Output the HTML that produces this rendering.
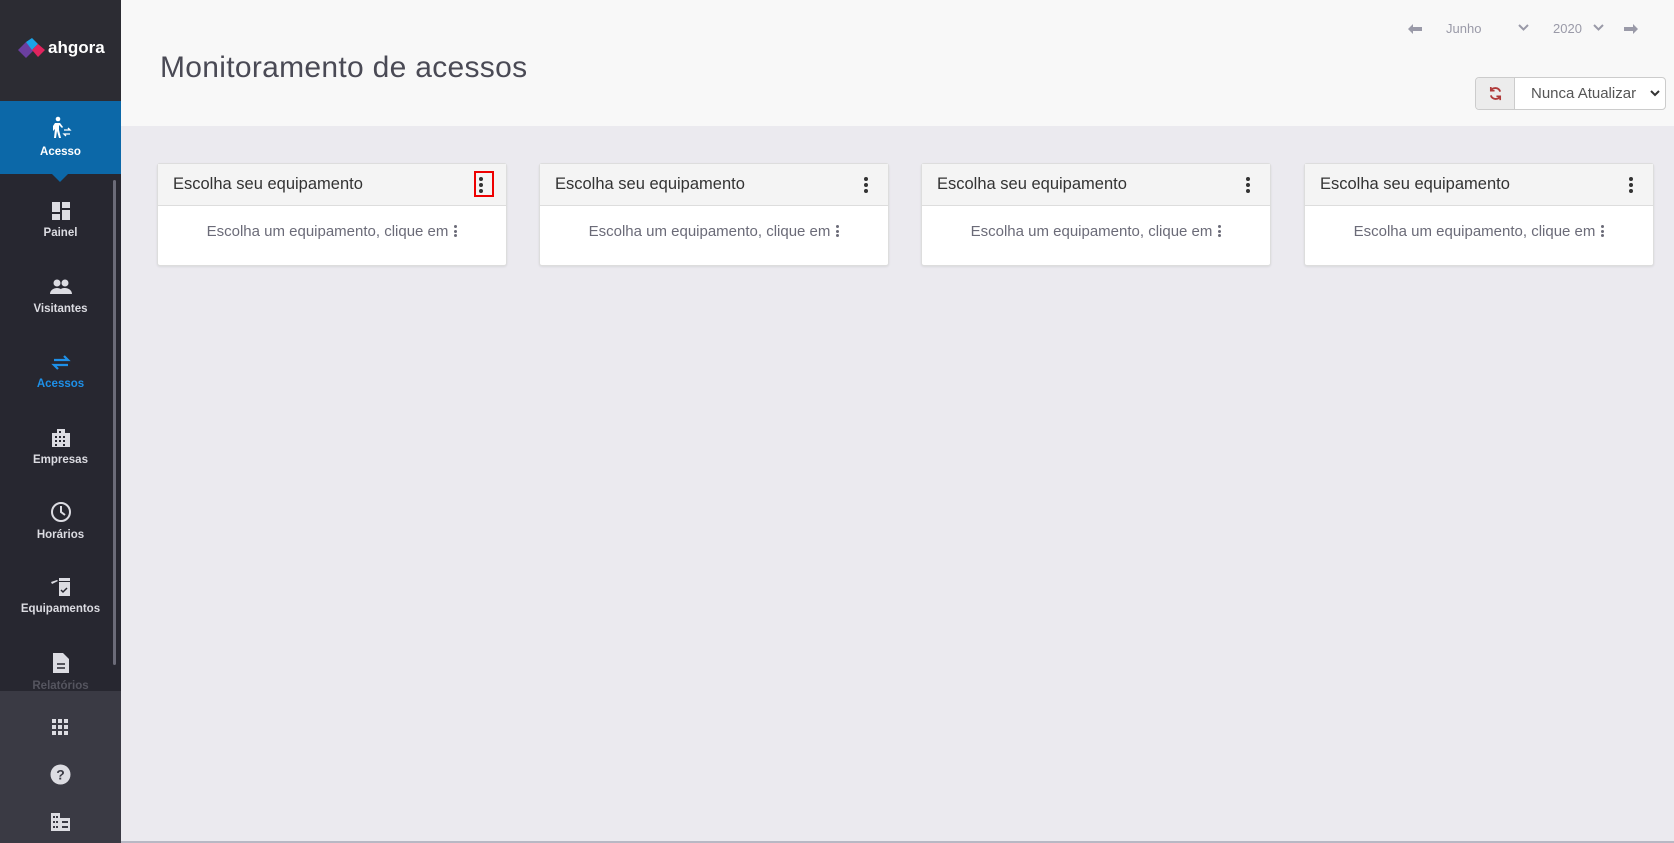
<!DOCTYPE html>
<html><head><meta charset="utf-8"><style>
*{box-sizing:border-box;margin:0;padding:0}
body{width:1674px;height:843px;overflow:hidden;background:#ebeaef;font-family:"Liberation Sans",sans-serif;position:relative}
.sb{position:absolute;left:0;top:0;width:121px;height:843px;background:#272730}
.logo{position:absolute;left:0;top:0;width:121px;height:101px;background:#2c2c33}
.act{position:absolute;left:0;top:101px;width:121px;height:73px;background:#0c68a8}
.act:after{content:"";position:absolute;left:52px;bottom:-8px;border:8px solid transparent;border-top-color:#0c68a8;border-bottom:0}
.it{position:absolute;left:0;width:121px;text-align:center;color:#dcdce2;font-size:11.5px;font-weight:bold}
.it svg{display:block;margin:0 auto 6px}
.bot{position:absolute;left:0;top:691px;width:121px;height:152px;background:#3a3a44}
.scroll{position:absolute;left:113px;top:180px;width:3px;height:485px;background:#6b6b78;border-radius:2px}
.hdr{position:absolute;left:121px;top:0;width:1553px;height:126px;background:#f8f8f8}
h1{position:absolute;left:160px;top:51px;font-size:30px;font-weight:normal;color:#4a4a55;letter-spacing:.3px}
.card{position:absolute;top:163px;width:350px;height:103px;background:#fff;border:1px solid #ddd;border-radius:3px;box-shadow:0 1px 2px rgba(0,0,0,.08)}
.ch{height:42px;background:#f4f4f4;border-bottom:1px solid #ddd;padding:11px 0 0 15px;font-size:16.5px;color:#333;position:relative}
.kb{position:absolute;right:20px;top:13px;width:4px}
.kb i{display:block;width:4px;height:4px;border-radius:2px;background:#333;margin-bottom:2px}
.cb{text-align:center;font-size:15px;color:#6b6b78;padding-top:17px}
.cb b{display:inline-block;width:3px;vertical-align:middle;margin-left:6px}
.cb b i{display:block;width:3px;height:3px;border-radius:2px;background:#6b6b78;margin-bottom:1.5px}
.top{position:absolute;top:21px;font-size:13px;color:#9a9aa8}
</style></head><body>
<div class="sb"></div>
<div class="logo">
<svg style="position:absolute;left:17px;top:38px" width="30" height="24" viewBox="0 0 30 24"><path d="M1 12l8-8 8 8-8 8z" fill="#6b3fa0"/><path d="M9 4l6-4 6 6-6 6z" fill="#1aa3e8"/><path d="M15 12l6-6 7 6-7 7z" fill="#e0245e"/></svg>
<div style="position:absolute;left:48px;top:38px;color:#fff;font-size:17px;font-weight:bold">ahgora</div>
</div>
<div class="act"></div>
<div class="it" style="top:116px;color:#fff"><svg width="24" height="24" viewBox="0 0 24 24" fill="#fff"><circle cx="9" cy="3" r="2.3"/><path d="M6 7h5l3 4-1 1-3-3v5l2 8h-2l-2-7-1 7H5l1-9-2 2V10z"/><path d="M15 14h6l-2-2M21 18h-6l2 2" stroke="#fff" stroke-width="1.3" fill="none"/></svg>Acesso</div>
<div class="scroll"></div>
<div class="it" style="top:201px"><svg width="20" height="20" viewBox="0 0 20 20" fill="#dcdce2"><rect x="1" y="1" width="8" height="10"/><rect x="11" y="1" width="8" height="6"/><rect x="1" y="13" width="8" height="6"/><rect x="11" y="9" width="8" height="10"/></svg>Painel</div>
<div class="it" style="top:277px"><svg width="24" height="20" viewBox="0 0 24 20" fill="#dcdce2"><circle cx="8" cy="6" r="3.5"/><circle cx="16" cy="6" r="3.5"/><path d="M1 17c0-4 4-6 7-6s7 2 7 6zM13 17c0-3 0-4-1-5 1-1 3-1 4-1 3 0 7 2 7 6z"/></svg>Visitantes</div>
<div class="it" style="top:352px;color:#1e90e8"><svg width="22" height="20" viewBox="0 0 22 20" fill="none" stroke="#1e90e8" stroke-width="2.2"><path d="M4 8h14l-4-4M18 13H4l4 4"/></svg>Acessos</div>
<div class="it" style="top:428px"><svg width="22" height="20" viewBox="0 0 22 20" fill="#dcdce2"><path d="M7 1h8v4h5v14H2V5h5z"/><g fill="#272730"><rect x="9" y="3" width="2" height="2"/><rect x="5" y="8" width="2" height="2"/><rect x="9" y="8" width="2" height="2"/><rect x="13" y="8" width="2" height="2"/><rect x="5" y="12" width="2" height="2"/><rect x="13" y="12" width="2" height="2"/><rect x="9" y="12" width="2" height="2"/><rect x="5" y="16" width="2" height="2"/><rect x="13" y="16" width="2" height="2"/></g></svg>Empresas</div>
<div class="it" style="top:501px"><svg width="22" height="22" viewBox="0 0 22 22" fill="none" stroke="#dcdce2" stroke-width="2"><circle cx="11" cy="11" r="9"/><path d="M11 5v6l4 3"/></svg>Horários</div>
<div class="it" style="top:577px"><svg width="22" height="20" viewBox="0 0 22 20" fill="#dcdce2"><path d="M1 5l6-2 1 1-6 3z"/><rect x="9" y="1" width="11" height="3"/><rect x="9" y="5" width="11" height="14"/><path d="M11 13l2 2 4-4" stroke="#272730" stroke-width="1.5" fill="none"/></svg>Equipamentos</div>
<div class="it" style="top:652px;color:#55555f"><svg width="18" height="22" viewBox="0 0 18 22" fill="#dcdce2"><path d="M1 1h10l6 6v14H1z"/><path d="M5 12h8M5 16h8" stroke="#272730" stroke-width="1.6"/></svg>Relatórios</div>
<div class="bot">
<svg style="position:absolute;left:51px;top:27px" width="18" height="18" viewBox="0 0 18 18" fill="#dcdce2"><rect x="1" y="1" width="4" height="4"/><rect x="7" y="1" width="4" height="4"/><rect x="13" y="1" width="4" height="4"/><rect x="1" y="7" width="4" height="4"/><rect x="7" y="7" width="4" height="4"/><rect x="13" y="7" width="4" height="4"/><rect x="1" y="13" width="4" height="4"/><rect x="7" y="13" width="4" height="4"/><rect x="13" y="13" width="4" height="4"/></svg>
<svg style="position:absolute;left:50px;top:73px" width="21" height="21" viewBox="0 0 21 21"><circle cx="10.5" cy="10.5" r="10" fill="#dcdce2"/><text x="10.5" y="15.5" font-size="14" font-weight="bold" text-anchor="middle" fill="#3a3a44" font-family="Liberation Sans">?</text></svg>
<svg style="position:absolute;left:50px;top:121px" width="21" height="20" viewBox="0 0 21 20" fill="#dcdce2"><rect x="1" y="1" width="9" height="18"/><rect x="10" y="6" width="10" height="13"/><g fill="#3a3a44"><rect x="3" y="4" width="2" height="2"/><rect x="6" y="4" width="2" height="2"/><rect x="3" y="9" width="2" height="2"/><rect x="6" y="9" width="2" height="2"/><rect x="3" y="14" width="2" height="2"/><rect x="6" y="14" width="2" height="2"/><rect x="12" y="9" width="6" height="2"/><rect x="12" y="14" width="6" height="2"/></g></svg>
</div>
<div class="hdr"></div>
<h1>Monitoramento de acessos</h1>
<svg style="position:absolute;left:1408px;top:23px" width="14" height="12" viewBox="0 0 14 12" fill="#9a9aa8"><path d="M0 6l5-5v3h9v4H5v3z"/></svg>
<div class="top" style="left:1446px">Junho</div>
<svg style="position:absolute;left:1518px;top:24px" width="11" height="8" viewBox="0 0 11 8"><path d="M1 1l4.5 4.5L10 1" stroke="#9a9aa8" stroke-width="2" fill="none"/></svg>
<div class="top" style="left:1553px">2020</div>
<svg style="position:absolute;left:1593px;top:24px" width="11" height="8" viewBox="0 0 11 8"><path d="M1 1l4.5 4.5L10 1" stroke="#9a9aa8" stroke-width="2" fill="none"/></svg>
<svg style="position:absolute;left:1624px;top:23px" width="14" height="12" viewBox="0 0 14 12" fill="#9a9aa8"><path d="M14 6L9 1v3H0v4h9v3z"/></svg>
<div style="position:absolute;left:1475px;top:77px;width:191px;height:33px;border:1px solid #ccc;border-radius:4px;background:#fff;overflow:hidden">
<div style="position:absolute;left:0;top:0;width:39px;height:31px;background:#ececec;border-right:1px solid #ccc"></div>
<svg style="position:absolute;left:12px;top:8px" width="15" height="15" viewBox="0 0 16 16" fill="none" stroke="#b03a3a" stroke-width="2"><path d="M13 6A5.5 5.5 0 0 0 3 5M3 10a5.5 5.5 0 0 0 10 1"/><path d="M3 1v4h4M13 15v-4H9" stroke-width="1.8"/></svg>
<div style="position:absolute;left:55px;top:7px;font-size:15px;color:#555">Nunca Atualizar</div>
<svg style="position:absolute;left:174px;top:12px" width="10" height="7" viewBox="0 0 10 7"><path d="M1 1l4 4 4-4" stroke="#333" stroke-width="2" fill="none"/></svg>
</div>
<div class="card" style="left:157px"><div class="ch">Escolha seu equipamento<div class="kb" style="right:23px"><i></i><i></i><i></i></div><div style="position:absolute;right:12px;top:7px;width:20px;height:26px;border:2px solid #e00"></div></div><div class="cb">Escolha um equipamento, clique em<b><i></i><i></i><i></i></b></div></div>
<div class="card" style="left:539px"><div class="ch">Escolha seu equipamento<div class="kb"><i></i><i></i><i></i></div></div><div class="cb">Escolha um equipamento, clique em<b><i></i><i></i><i></i></b></div></div>
<div class="card" style="left:921px"><div class="ch">Escolha seu equipamento<div class="kb"><i></i><i></i><i></i></div></div><div class="cb">Escolha um equipamento, clique em<b><i></i><i></i><i></i></b></div></div>
<div class="card" style="left:1304px"><div class="ch">Escolha seu equipamento<div class="kb"><i></i><i></i><i></i></div></div><div class="cb">Escolha um equipamento, clique em<b><i></i><i></i><i></i></b></div></div>
<div style="position:absolute;left:121px;top:841px;width:1553px;height:2px;background:#b8b8c4"></div>
</body></html>
